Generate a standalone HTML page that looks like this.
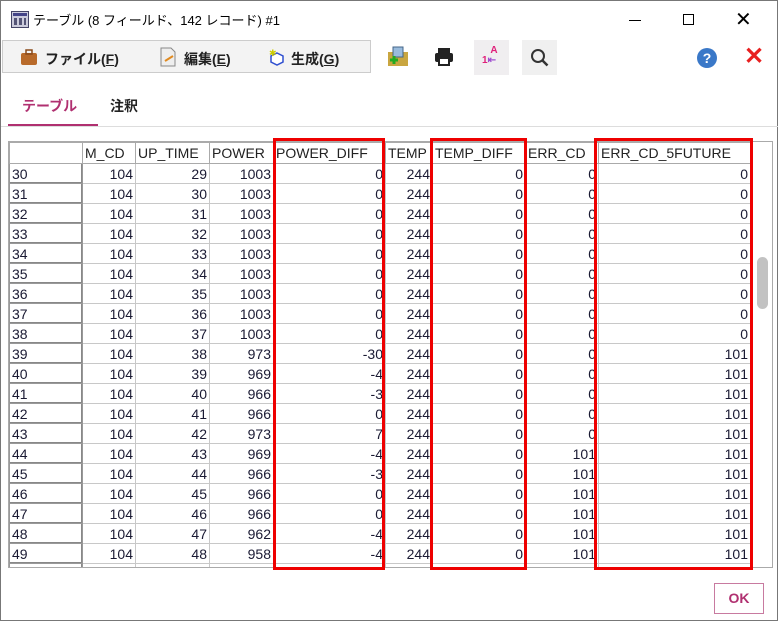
<!DOCTYPE html>
<html><head><meta charset="utf-8"><style>
*{margin:0;padding:0;box-sizing:border-box}
body{width:778px;height:621px;background:#fff;font-family:"Liberation Sans","Noto Sans CJK JP",sans-serif;position:relative;overflow:hidden;border:1px solid #777}
.abs{position:absolute}
.title{left:32px;top:9px;font-size:13px;color:#000}
.tb{left:1px;top:39px;width:369px;height:33px;background:#f3f3f3;border:1px solid #ccc}
.tb span{position:absolute;top:8px;font-size:14px;font-weight:bold;color:#222}
.tab{font-size:14px;font-weight:bold}
.clip{position:absolute;left:8px;top:141px;width:745px;height:425px;overflow:hidden}
table{border-collapse:collapse;table-layout:fixed;font-size:14px;color:#1a1a33}
td{height:20px;border:1px solid #c8c8c8;text-align:right;padding:0 2px;line-height:18px;white-space:nowrap;overflow:hidden}
tr.h td{text-align:left;height:21px;border-color:#aaa;color:#222}
td.r{text-align:left;border:1px solid #999;box-shadow:inset -1px -1px 0 #888}
.red{position:absolute;border:3px solid #e00;top:137px;height:432px}
</style></head><body>
<svg class="abs" style="left:10px;top:10px" width="18" height="17"><rect x="0.5" y="0.5" width="17" height="16" fill="#ccd" stroke="#446"/><rect x="2" y="2" width="14" height="3" fill="#448"/><g fill="#557"><rect x="3" y="7" width="3" height="7"/><rect x="8" y="7" width="3" height="7"/><rect x="13" y="7" width="2" height="7"/></g></svg>
<div class="abs title">テーブル (8 フィールド、142 レコード) #1</div>
<div class="abs" style="left:628px;top:19px;width:12px;height:1px;background:#000"></div>
<div class="abs" style="left:682px;top:13px;width:11px;height:11px;border:1px solid #000"></div>
<div class="abs" style="left:734px;top:6px;font-size:20px;font-weight:300">✕</div>
<div class="abs tb">
<svg style="position:absolute;left:16px;top:6px" width="20" height="20"><rect x="2" y="6" width="16" height="12" rx="2" fill="#b86a2a"/><rect x="7" y="3" width="6" height="4" fill="none" stroke="#8a4a1a" stroke-width="1.5"/></svg>
<span style="left:42px">ファイル(<u>F</u>)</span>
<svg style="position:absolute;left:156px;top:6px" width="18" height="20"><path d="M2 1h10l4 4v14H2z" fill="#eee" stroke="#888"/><path d="M6 14l8-5" stroke="#e08a20" stroke-width="2"/></svg>
<span style="left:181px">編集(<u>E</u>)</span>
<svg style="position:absolute;left:264px;top:6px" width="20" height="20"><polygon points="10,6 16,9 16,15 10,18 4,15 4,9" fill="#fff" stroke="#3050d0" stroke-width="1.5"/><text x="2" y="9" font-size="9" fill="#cc0">✱</text></svg>
<span style="left:288px">生成(<u>G</u>)</span>
</div>
<svg class="abs" style="left:386px;top:45px" width="22" height="22"><rect x="1" y="6" width="20" height="14" fill="#c9a640"/><rect x="6" y="1" width="10" height="10" fill="#9bd" stroke="#468"/><path d="M3 14h8M7 10v8" stroke="#2a2" stroke-width="3"/></svg>
<svg class="abs" style="left:433px;top:46px" width="20" height="20"><rect x="4" y="1" width="12" height="5" fill="#222"/><rect x="1" y="6" width="18" height="9" rx="2" fill="#222"/><rect x="5" y="11" width="10" height="7" fill="#fff" stroke="#222" stroke-width="2"/></svg>
<div class="abs" style="left:473px;top:39px;width:35px;height:35px;background:#f0eef0"></div>
<div class="abs" style="left:481px;top:45px;font-size:10px;font-weight:bold;color:#e0207a;line-height:10px">&nbsp;&nbsp;&nbsp;A<br>1<span style="color:#a050d0">⇤</span></div>
<div class="abs" style="left:521px;top:39px;width:35px;height:35px;background:#f0f0f0"></div>
<svg class="abs" style="left:529px;top:47px" width="20" height="20"><circle cx="8" cy="8" r="6" fill="none" stroke="#333" stroke-width="2"/><path d="M12.5 12.5l5 5" stroke="#333" stroke-width="2.5"/></svg>
<div class="abs" style="left:696px;top:47px;width:20px;height:20px;border-radius:50%;background:#3a78c8;color:#fff;font-weight:bold;font-size:14px;text-align:center;line-height:20px">?</div>
<div class="abs" style="left:743px;top:41px;font-size:24px;font-weight:bold;color:#e82020">✕</div>
<div class="abs tab" style="left:21px;top:95px;color:#b03070">テーブル</div>
<div class="abs tab" style="left:109px;top:95px;color:#222">注釈</div>
<div class="abs" style="left:7px;top:123px;width:90px;height:3px;background:#b03070"></div>
<div class="abs" style="left:0;top:125px;width:778px;height:1px;background:#ddd"></div>
<div class="abs" style="left:7px;top:140px;width:765px;height:427px;border:1px solid #aaa"></div>
<div class="clip"><table>
<colgroup><col style="width:73px"><col style="width:53px"><col style="width:74px"><col style="width:64px"><col style="width:112px"><col style="width:47px"><col style="width:93px"><col style="width:73px"><col style="width:152px"></colgroup>
<tr class="h"><td></td><td>M_CD</td><td>UP_TIME</td><td>POWER</td><td>POWER_DIFF</td><td>TEMP</td><td>TEMP_DIFF</td><td>ERR_CD</td><td>ERR_CD_5FUTURE</td></tr>
<tr><td class="r">30</td><td>104</td><td>29</td><td>1003</td><td>0</td><td>244</td><td>0</td><td>0</td><td>0</td></tr>
<tr><td class="r">31</td><td>104</td><td>30</td><td>1003</td><td>0</td><td>244</td><td>0</td><td>0</td><td>0</td></tr>
<tr><td class="r">32</td><td>104</td><td>31</td><td>1003</td><td>0</td><td>244</td><td>0</td><td>0</td><td>0</td></tr>
<tr><td class="r">33</td><td>104</td><td>32</td><td>1003</td><td>0</td><td>244</td><td>0</td><td>0</td><td>0</td></tr>
<tr><td class="r">34</td><td>104</td><td>33</td><td>1003</td><td>0</td><td>244</td><td>0</td><td>0</td><td>0</td></tr>
<tr><td class="r">35</td><td>104</td><td>34</td><td>1003</td><td>0</td><td>244</td><td>0</td><td>0</td><td>0</td></tr>
<tr><td class="r">36</td><td>104</td><td>35</td><td>1003</td><td>0</td><td>244</td><td>0</td><td>0</td><td>0</td></tr>
<tr><td class="r">37</td><td>104</td><td>36</td><td>1003</td><td>0</td><td>244</td><td>0</td><td>0</td><td>0</td></tr>
<tr><td class="r">38</td><td>104</td><td>37</td><td>1003</td><td>0</td><td>244</td><td>0</td><td>0</td><td>0</td></tr>
<tr><td class="r">39</td><td>104</td><td>38</td><td>973</td><td>-30</td><td>244</td><td>0</td><td>0</td><td>101</td></tr>
<tr><td class="r">40</td><td>104</td><td>39</td><td>969</td><td>-4</td><td>244</td><td>0</td><td>0</td><td>101</td></tr>
<tr><td class="r">41</td><td>104</td><td>40</td><td>966</td><td>-3</td><td>244</td><td>0</td><td>0</td><td>101</td></tr>
<tr><td class="r">42</td><td>104</td><td>41</td><td>966</td><td>0</td><td>244</td><td>0</td><td>0</td><td>101</td></tr>
<tr><td class="r">43</td><td>104</td><td>42</td><td>973</td><td>7</td><td>244</td><td>0</td><td>0</td><td>101</td></tr>
<tr><td class="r">44</td><td>104</td><td>43</td><td>969</td><td>-4</td><td>244</td><td>0</td><td>101</td><td>101</td></tr>
<tr><td class="r">45</td><td>104</td><td>44</td><td>966</td><td>-3</td><td>244</td><td>0</td><td>101</td><td>101</td></tr>
<tr><td class="r">46</td><td>104</td><td>45</td><td>966</td><td>0</td><td>244</td><td>0</td><td>101</td><td>101</td></tr>
<tr><td class="r">47</td><td>104</td><td>46</td><td>966</td><td>0</td><td>244</td><td>0</td><td>101</td><td>101</td></tr>
<tr><td class="r">48</td><td>104</td><td>47</td><td>962</td><td>-4</td><td>244</td><td>0</td><td>101</td><td>101</td></tr>
<tr><td class="r">49</td><td>104</td><td>48</td><td>958</td><td>-4</td><td>244</td><td>0</td><td>101</td><td>101</td></tr>
<tr><td class="r"></td><td></td><td></td><td></td><td></td><td></td><td></td><td></td><td></td></tr>
</table></div>
<div class="abs" style="left:756px;top:256px;width:11px;height:52px;border-radius:6px;background:#c2c2c2"></div>
<div class="red" style="left:272px;width:112px"></div>
<div class="red" style="left:429px;width:97px"></div>
<div class="red" style="left:593px;width:159px"></div>
<div class="abs" style="left:713px;top:582px;width:50px;height:31px;border:1px solid #c87aa0;color:#b03070;font-weight:bold;font-size:14px;text-align:center;line-height:29px">OK</div>
</body></html>
